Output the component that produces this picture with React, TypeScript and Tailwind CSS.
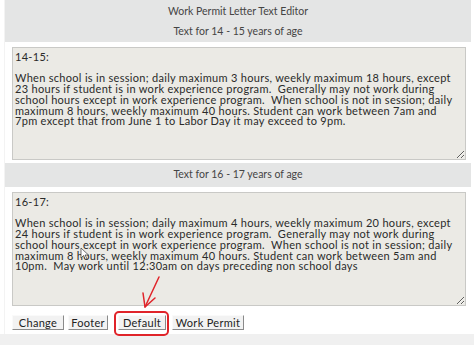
import React from "react";

const t1 = `14-15:

When school is in session; daily maximum 3 hours, weekly maximum 18 hours, except
23 hours if student is in work experience program.  Generally may not work during
school hours except in work experience program.  When school is not in session; daily
maximum 8 hours, weekly maximum 40 hours. Student can work between 7am and
7pm except that from June 1 to Labor Day it may exceed to 9pm.`;

const t2 = `16-17:

When school is in session; daily maximum 4 hours, weekly maximum 20 hours, except
24 hours if student is in work experience program.  Generally may not work during
school hours except in work experience program.  When school is not in session; daily
maximum 8 hours, weekly maximum 40 hours. Student can work between 5am and
10pm.  May work until 12:30am on days preceding non school days`;

function Area({ value, h }: { value: string; h: string }) {
  return (
    <textarea
      readOnly
      wrap="off"
      defaultValue={value}
      className={`block w-[454px] ${h} ml-[7px] bg-[#ebeae5] border border-[#c9c9c6] text-[#2a2a2a] text-[11px] tracking-[0.3px] leading-[10.7px] px-[2px] pt-[4px] overflow-hidden resize-y outline-none`}
      style={{ fontFamily: "Lato, 'Open Sans', sans-serif" }}
    />
  );
}

function Btn({ children, cls }: { children: React.ReactNode; cls: string }) {
  return (
    <button
      className={`h-[15px] flex items-center justify-center bg-[#f2f2f2] border border-t-[#fafafa] border-l-[#fafafa] border-b-[#8a8a8a] border-r-[#8a8a8a] text-[11px] tracking-[0.3px] leading-[12px] text-[#222] ${cls}`}
    >
      {children}
    </button>
  );
}

export default function App() {
  return (
    <div
      className="relative w-[474px] h-[345px] bg-white overflow-hidden text-[#333]"
      style={{ fontFamily: "Lato, 'Open Sans', sans-serif" }}
    >
      <div className="ml-[4px] w-[467px] border-l border-[#f3f3f3]">
        <div className="bg-[#e4e5e5] h-[42px] flex flex-col items-center text-[#444] text-[10.5px]">
          <div className="h-[22px] flex items-center pt-[2px]">Work Permit Letter Text Editor</div>
          <div className="h-[20px] flex items-center">Text for 14 - 15 years of age</div>
        </div>
        <div className="h-[5px]" />
        <Area value={t1} h="h-[113px]" />
        <div className="h-[3px]" />
        <div className="bg-[#e4e5e5] h-[24px] flex items-center justify-center text-[10.5px] text-[#444]">
          Text for 16 - 17 years of age
        </div>
        <div className="h-[5px]" />
        <Area value={t2} h="h-[114px]" />
        <div className="h-[28px] flex items-center pl-[7px] pt-[5px]">
          <Btn cls="w-[52px]">Change</Btn>
          <Btn cls="w-[40px] ml-[4px]">Footer</Btn>
          <Btn cls="w-[48px] ml-[10px]">Default</Btn>
          <Btn cls="w-[72px] ml-[6px]">Work Permit</Btn>
        </div>
      </div>
      <div className="absolute left-0 right-0 top-[334px] h-[11px] bg-[#f0f0f0]" />
      <div className="absolute left-[114px] top-[311px] w-[55px] h-[25px] border-2 border-[#e0242a] rounded-[5px]" />
      <svg className="absolute left-0 top-0" width="474" height="345" viewBox="0 0 474 345" fill="none">
        <path d="M159 277 L145 307" stroke="#e0242a" strokeWidth="1.5" strokeLinecap="round" />
        <path d="M143 293 L145 307 L155 298" stroke="#e0242a" strokeWidth="1.5" strokeLinecap="round" strokeLinejoin="round" />
        <path d="M81 248 L81 258 L83.5 255.5 L85.5 259.5 L87 258.8 L85 255 L88.5 255 Z" fill="#fff" stroke="#333" strokeWidth="0.7" />
      </svg>
    </div>
  );
}
